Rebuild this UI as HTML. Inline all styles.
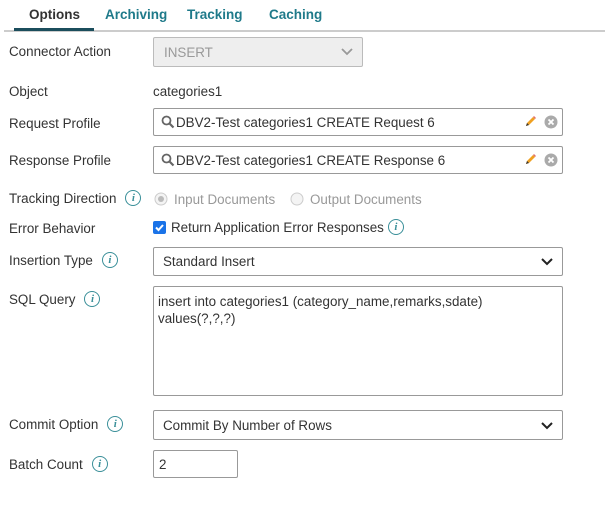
<!DOCTYPE html>
<html><head><meta charset="utf-8"><style>
*{box-sizing:border-box;margin:0;padding:0}
body{width:605px;height:511px;background:#fff;font-family:"Liberation Sans",sans-serif;font-size:13.4px;color:#333;position:relative;overflow:hidden}
.a{position:absolute;white-space:nowrap}
.tab{top:7px;font-size:13.5px;color:#1f7a8a;font-weight:bold}
.lbl{left:9px}
.box{position:absolute;border:1px solid #999;border-radius:2px;background:#fff}
.info{display:inline-block;width:16px;height:16px;border:1.3px solid #3a8f99;border-radius:50%;color:#3a8f99;font:italic bold 11px "Liberation Serif",serif;text-align:center;line-height:14px;vertical-align:middle;margin-left:9px;margin-top:-2px}
</style></head><body>
<div class="a tab" style="left:29px;color:#333">Options</div>
<div class="a tab" style="left:105px">Archiving</div>
<div class="a tab" style="left:187px">Tracking</div>
<div class="a tab" style="left:269px">Caching</div>
<div class="a" style="left:4px;top:30px;width:601px;height:2px;background:#ccc"></div>
<div class="a" style="left:14px;top:28px;width:80px;height:3px;background:#1b4d5c"></div>

<div class="a lbl" style="top:44px">Connector Action</div>
<div class="box" style="left:153px;top:37px;width:210px;height:30px;background:#eee;border-color:#bbb"><span class="a" style="left:10px;top:7px;color:#999">INSERT</span>
<svg class="a" style="left:187px;top:10px" width="12" height="8" viewBox="0 0 12 8"><path d="M1 1l5 5 5-5" stroke="#999" stroke-width="1.8" fill="none"/></svg></div>

<div class="a lbl" style="top:84px">Object</div>
<div class="a" style="left:153px;top:84px">categories1</div>

<div class="a lbl" style="top:116px">Request Profile</div>
<div class="box" style="left:153px;top:108px;width:410px;height:28px">
<svg class="a" style="left:7px;top:6px" width="14" height="14" viewBox="0 0 14 14"><circle cx="5.5" cy="5.5" r="4" stroke="#666" stroke-width="1.8" fill="none"/><path d="M8.5 8.5l4 4" stroke="#666" stroke-width="2.2"/></svg>
<span class="a" style="left:22px;top:6px">DBV2-Test categories1 CREATE Request 6</span>
<svg class="a" style="left:370px;top:6px" width="13" height="13" viewBox="0 0 13 13"><path d="M2 11l1-3 6-6 2 2-6 6z" fill="#f0a020"/><path d="M9 2l1-1 2 2-1 1z" fill="#e07070"/><path d="M2 11l1-3 2 2z" fill="#333"/></svg>
<svg class="a" style="left:390px;top:6px" width="14" height="14" viewBox="0 0 14 14"><circle cx="7" cy="7" r="6.5" fill="#aaa"/><path d="M4.5 4.5l5 5M9.5 4.5l-5 5" stroke="#fff" stroke-width="1.8"/></svg>
</div>

<div class="a lbl" style="top:153px">Response Profile</div>
<div class="box" style="left:153px;top:146px;width:410px;height:28px">
<svg class="a" style="left:7px;top:6px" width="14" height="14" viewBox="0 0 14 14"><circle cx="5.5" cy="5.5" r="4" stroke="#666" stroke-width="1.8" fill="none"/><path d="M8.5 8.5l4 4" stroke="#666" stroke-width="2.2"/></svg>
<span class="a" style="left:22px;top:6px">DBV2-Test categories1 CREATE Response 6</span>
<svg class="a" style="left:370px;top:6px" width="13" height="13" viewBox="0 0 13 13"><path d="M2 11l1-3 6-6 2 2-6 6z" fill="#f0a020"/><path d="M9 2l1-1 2 2-1 1z" fill="#e07070"/><path d="M2 11l1-3 2 2z" fill="#333"/></svg>
<svg class="a" style="left:390px;top:6px" width="14" height="14" viewBox="0 0 14 14"><circle cx="7" cy="7" r="6.5" fill="#aaa"/><path d="M4.5 4.5l5 5M9.5 4.5l-5 5" stroke="#fff" stroke-width="1.8"/></svg>
</div>

<div class="a lbl" style="top:191px">Tracking Direction<span class="info">i</span></div>
<svg class="a" style="left:154px;top:192px" width="14" height="14"><circle cx="7" cy="7" r="6" fill="#f4f4f4" stroke="#ccc"/><circle cx="7" cy="7" r="3" fill="#bbb"/></svg>
<div class="a" style="left:174px;top:192px;color:#999">Input Documents</div>
<svg class="a" style="left:290px;top:192px" width="14" height="14"><circle cx="7" cy="7" r="6" fill="#f4f4f4" stroke="#ccc"/></svg>
<div class="a" style="left:310px;top:192px;color:#999">Output Documents</div>

<div class="a lbl" style="top:221px">Error Behavior</div>
<svg class="a" style="left:153px;top:221px" width="13" height="13"><rect width="13" height="13" rx="2" fill="#1a73e8"/><path d="M3 6.5l2.5 2.5 4.5-5" stroke="#fff" stroke-width="2" fill="none"/></svg>
<div class="a" style="left:171px;top:220px">Return Application Error Responses<span class="info" style="margin-left:4px">i</span></div>

<div class="a lbl" style="top:253px">Insertion Type<span class="info">i</span></div>
<div class="box" style="left:153px;top:247px;width:410px;height:29px"><span class="a" style="left:9px;top:6px">Standard Insert</span>
<svg class="a" style="left:387px;top:10px" width="12" height="8" viewBox="0 0 12 8"><path d="M1 1l5 5 5-5" stroke="#222" stroke-width="2" fill="none"/></svg></div>

<div class="a lbl" style="top:292px">SQL Query<span class="info">i</span></div>
<div class="box" style="left:153px;top:286px;width:410px;height:110px"><div class="a" style="left:4px;top:6px;line-height:17px">insert into categories1 (category_name,remarks,sdate)<br>values(?,?,?)</div></div>

<div class="a lbl" style="top:417px">Commit Option<span class="info">i</span></div>
<div class="box" style="left:153px;top:410px;width:410px;height:30px"><span class="a" style="left:9px;top:7px">Commit By Number of Rows</span>
<svg class="a" style="left:387px;top:11px" width="12" height="8" viewBox="0 0 12 8"><path d="M1 1l5 5 5-5" stroke="#222" stroke-width="2" fill="none"/></svg></div>

<div class="a lbl" style="top:457px">Batch Count<span class="info">i</span></div>
<div class="box" style="left:153px;top:450px;width:85px;height:28px"><span class="a" style="left:5px;top:6px">2</span></div>
</body></html>
